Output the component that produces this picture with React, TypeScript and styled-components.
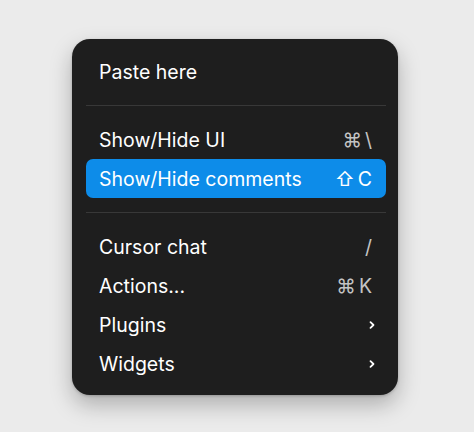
import styled, { createGlobalStyle } from "styled-components";

const GlobalStyle = createGlobalStyle`
  html, body {
    margin: 0;
    padding: 0;
    background: #ebebeb;
  }
  body {
    font-family: Inter, "Noto Sans", "DejaVu Sans", sans-serif;
  }
`;

const Page = styled.div`
  width: 474px;
  height: 432px;
  padding: 39px 0 0 72px;
  box-sizing: border-box;
`;

// dark context menu panel
const Menu = styled.div`
  width: 326px;
  box-sizing: border-box;
  padding: 13px 12px 12px 14px;
  background: #1e1e1e;
  border-radius: 18px;
  box-shadow: 0 10px 22px rgba(0, 0, 0, 0.26), 0 1px 3px rgba(0, 0, 0, 0.2);
  display: flex;
  flex-direction: column;
`;

const Row = styled.div<{ $active?: boolean }>`
  height: 39px;
  display: flex;
  align-items: center;
  justify-content: space-between;
  padding: 0 14px 0 13px;
  border-radius: 7px;
  background: ${(p) => (p.$active ? "#0d8ce9" : "transparent")};
  color: #ffffff;
  font-size: 19.5px;
`;

const Label = styled.span`
  white-space: nowrap;
`;

const Shortcut = styled.span<{ $active?: boolean }>`
  display: flex;
  align-items: center;
  gap: 3px;
  color: ${(p) => (p.$active ? "#ffffff" : "#c4c4c4")};
  font-size: 19.5px;
`;

const Arrow = styled.svg`
  margin-right: -4px;
`;

const Divider = styled.div`
  height: 29px;
  display: flex;
  align-items: center;
  &::after {
    content: "";
    flex: 1;
    height: 1px;
    background: #383838;
  }
`;

const Chevron = () => (
  <Arrow width="8" height="12" viewBox="0 0 8 12">
    <path d="M2.5 3.2 L5.5 6 L2.5 8.8" fill="none" stroke="#fff" strokeWidth="1.8" strokeLinecap="round" strokeLinejoin="round" />
  </Arrow>
);

type Item = { label: string; keys?: string[]; sub?: boolean; active?: boolean };

const groups: Item[][] = [
  [{ label: "Paste here" }],
  [
    { label: "Show/Hide UI", keys: ["⌘", "\\"] },
    { label: "Show/Hide comments", keys: ["⇧", "C"], active: true },
  ],
  [
    { label: "Cursor chat", keys: ["/"] },
    { label: "Actions...", keys: ["⌘", "K"] },
    { label: "Plugins", sub: true },
    { label: "Widgets", sub: true },
  ],
];

export default function App() {
  return (
    <>
      <GlobalStyle />
      <Page>
        <Menu>
          {groups.map((g, gi) => (
            <div key={gi}>
              {gi > 0 && <Divider />}
              {g.map((it) => (
                <Row key={it.label} $active={it.active}>
                  <Label>{it.label}</Label>
                  {it.keys && (
                    <Shortcut $active={it.active}>
                      {it.keys.map((k) => (
                        <span key={k}>{k}</span>
                      ))}
                    </Shortcut>
                  )}
                  {it.sub && <Chevron />}
                </Row>
              ))}
            </div>
          ))}
        </Menu>
      </Page>
    </>
  );
}
